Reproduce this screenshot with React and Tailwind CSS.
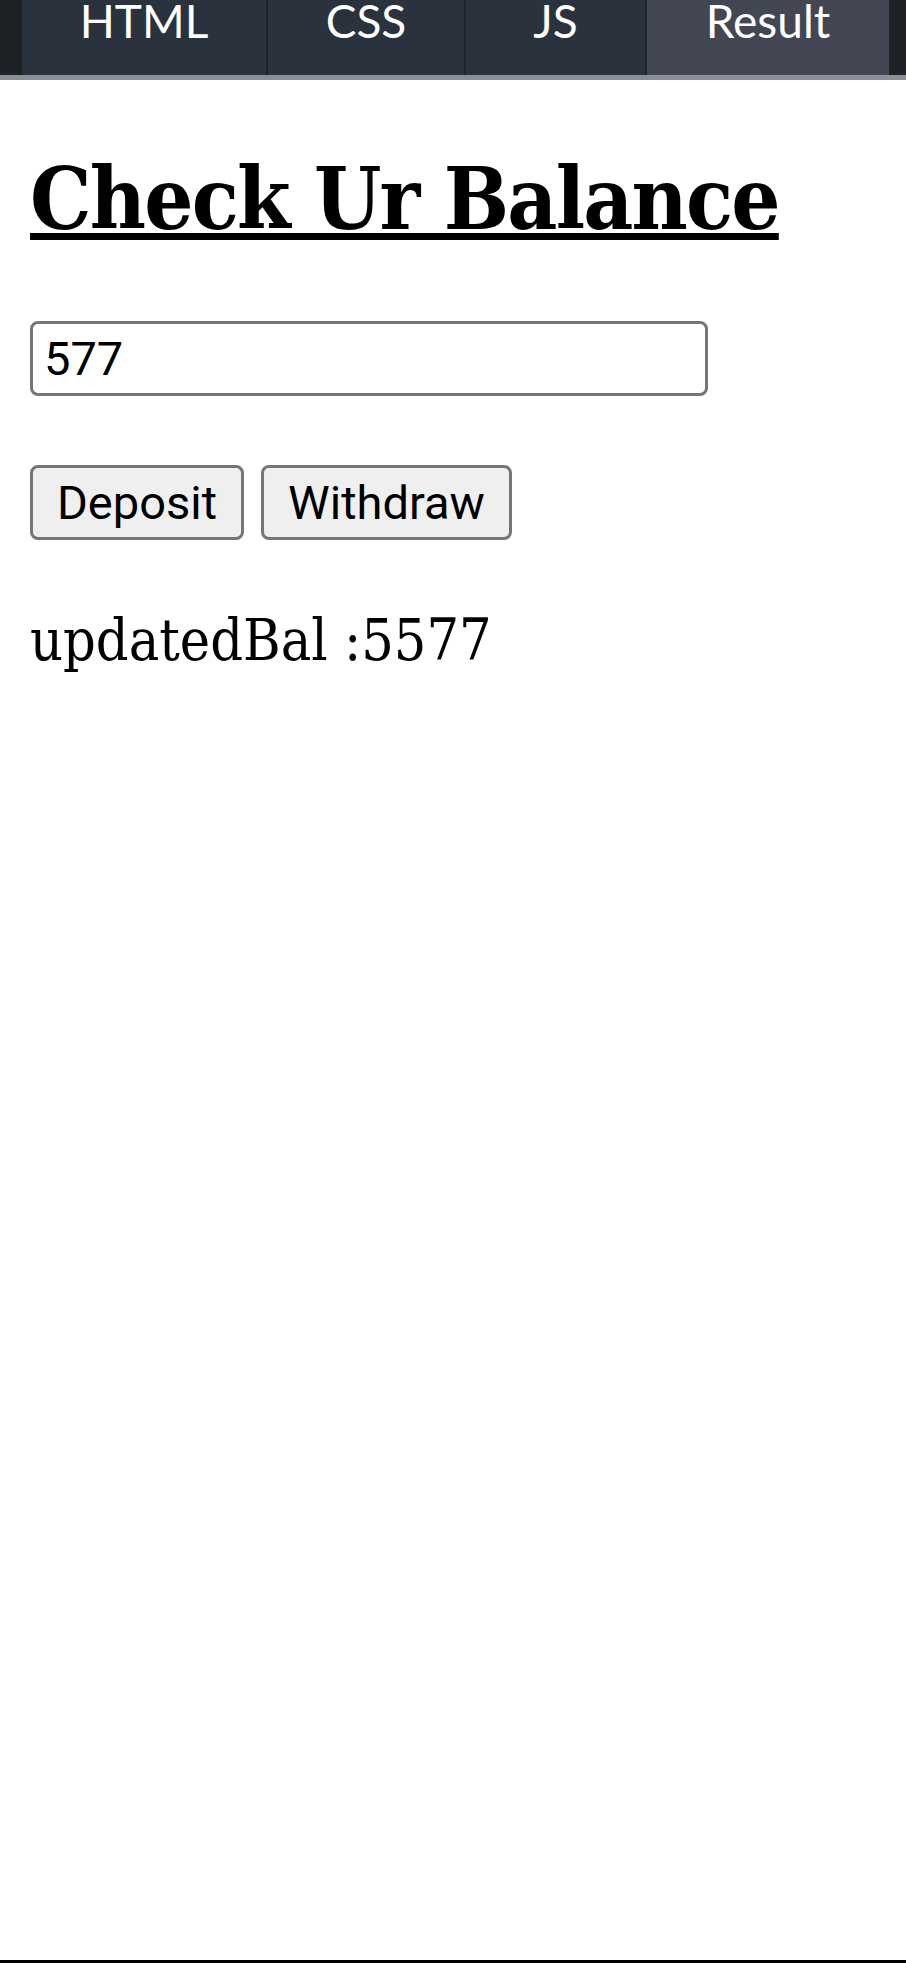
import { useState } from "react";

const tabs = [
  { name: "HTML", width: "w-[246px]" },
  { name: "CSS", width: "w-[198px]" },
  { name: "JS", width: "w-[181px]" },
  { name: "Result", width: "w-[244px]", active: true },
];

const App = () => {
  const [amount, setAmount] = useState("577");
  const [balance, setBalance] = useState(5577);

  function deposit() {
    setBalance(balance + Number(amount || 0));
  }

  function withdraw() {
    setBalance(balance - Number(amount || 0));
  }

  return (
    <div className="flex flex-col h-[1963px] bg-white border-b-[3px] border-black overflow-hidden">
      {/* codepen style tab bar */}
      <div className="flex h-[80px] shrink-0 bg-[#1e2126] border-b-[5px] border-[#8a8e95]">
        <div className="w-[22px] bg-[#1e2126]"></div>
        {tabs.map((tab) => (
          <div
            key={tab.name}
            className={`${tab.width} flex justify-center items-start border-r-[2px] border-[#1f242b] ${
              tab.active ? "bg-[#424753]" : "bg-[#2a323d]"
            }`}
          >
            <span className="text-[46px] leading-[41px] text-white font-['Lato',sans-serif]">
              {tab.name}
            </span>
          </div>
        ))}
      </div>

      <div className="flex flex-col items-start px-[30px] font-['DejaVu_Serif',serif] [font-stretch:condensed] text-black">
        <h1 className="mt-[76px] text-[86px] leading-none font-bold tracking-[-1.8px] whitespace-nowrap underline decoration-[7px] underline-offset-[4px]">
          Check Ur Balance
        </h1>

        <input
          type="text"
          className="mt-[79px] w-[678px] h-[75px] px-[11px] border-[3px] border-[#767676] rounded-[8px] text-[47px] font-['Roboto',sans-serif] [font-stretch:normal] outline-none"
          value={amount}
          onChange={(e) => setAmount(e.target.value)}
        />

        <div className="flex gap-[17px] mt-[69px] font-['Roboto',sans-serif] [font-stretch:normal]">
          <button
            className="w-[214px] h-[75px] bg-[#efefef] border-[3px] border-[#767676] rounded-[8px] text-[47px]"
            onClick={deposit}
          >
            Deposit
          </button>
          <button
            className="w-[251px] h-[75px] bg-[#efefef] border-[3px] border-[#767676] rounded-[8px] text-[47px]"
            onClick={withdraw}
          >
            Withdraw
          </button>
        </div>

        <p className="mt-[72px] text-[57px] leading-none whitespace-nowrap">updatedBal :{balance}</p>
      </div>
    </div>
  );
};

export default App;
